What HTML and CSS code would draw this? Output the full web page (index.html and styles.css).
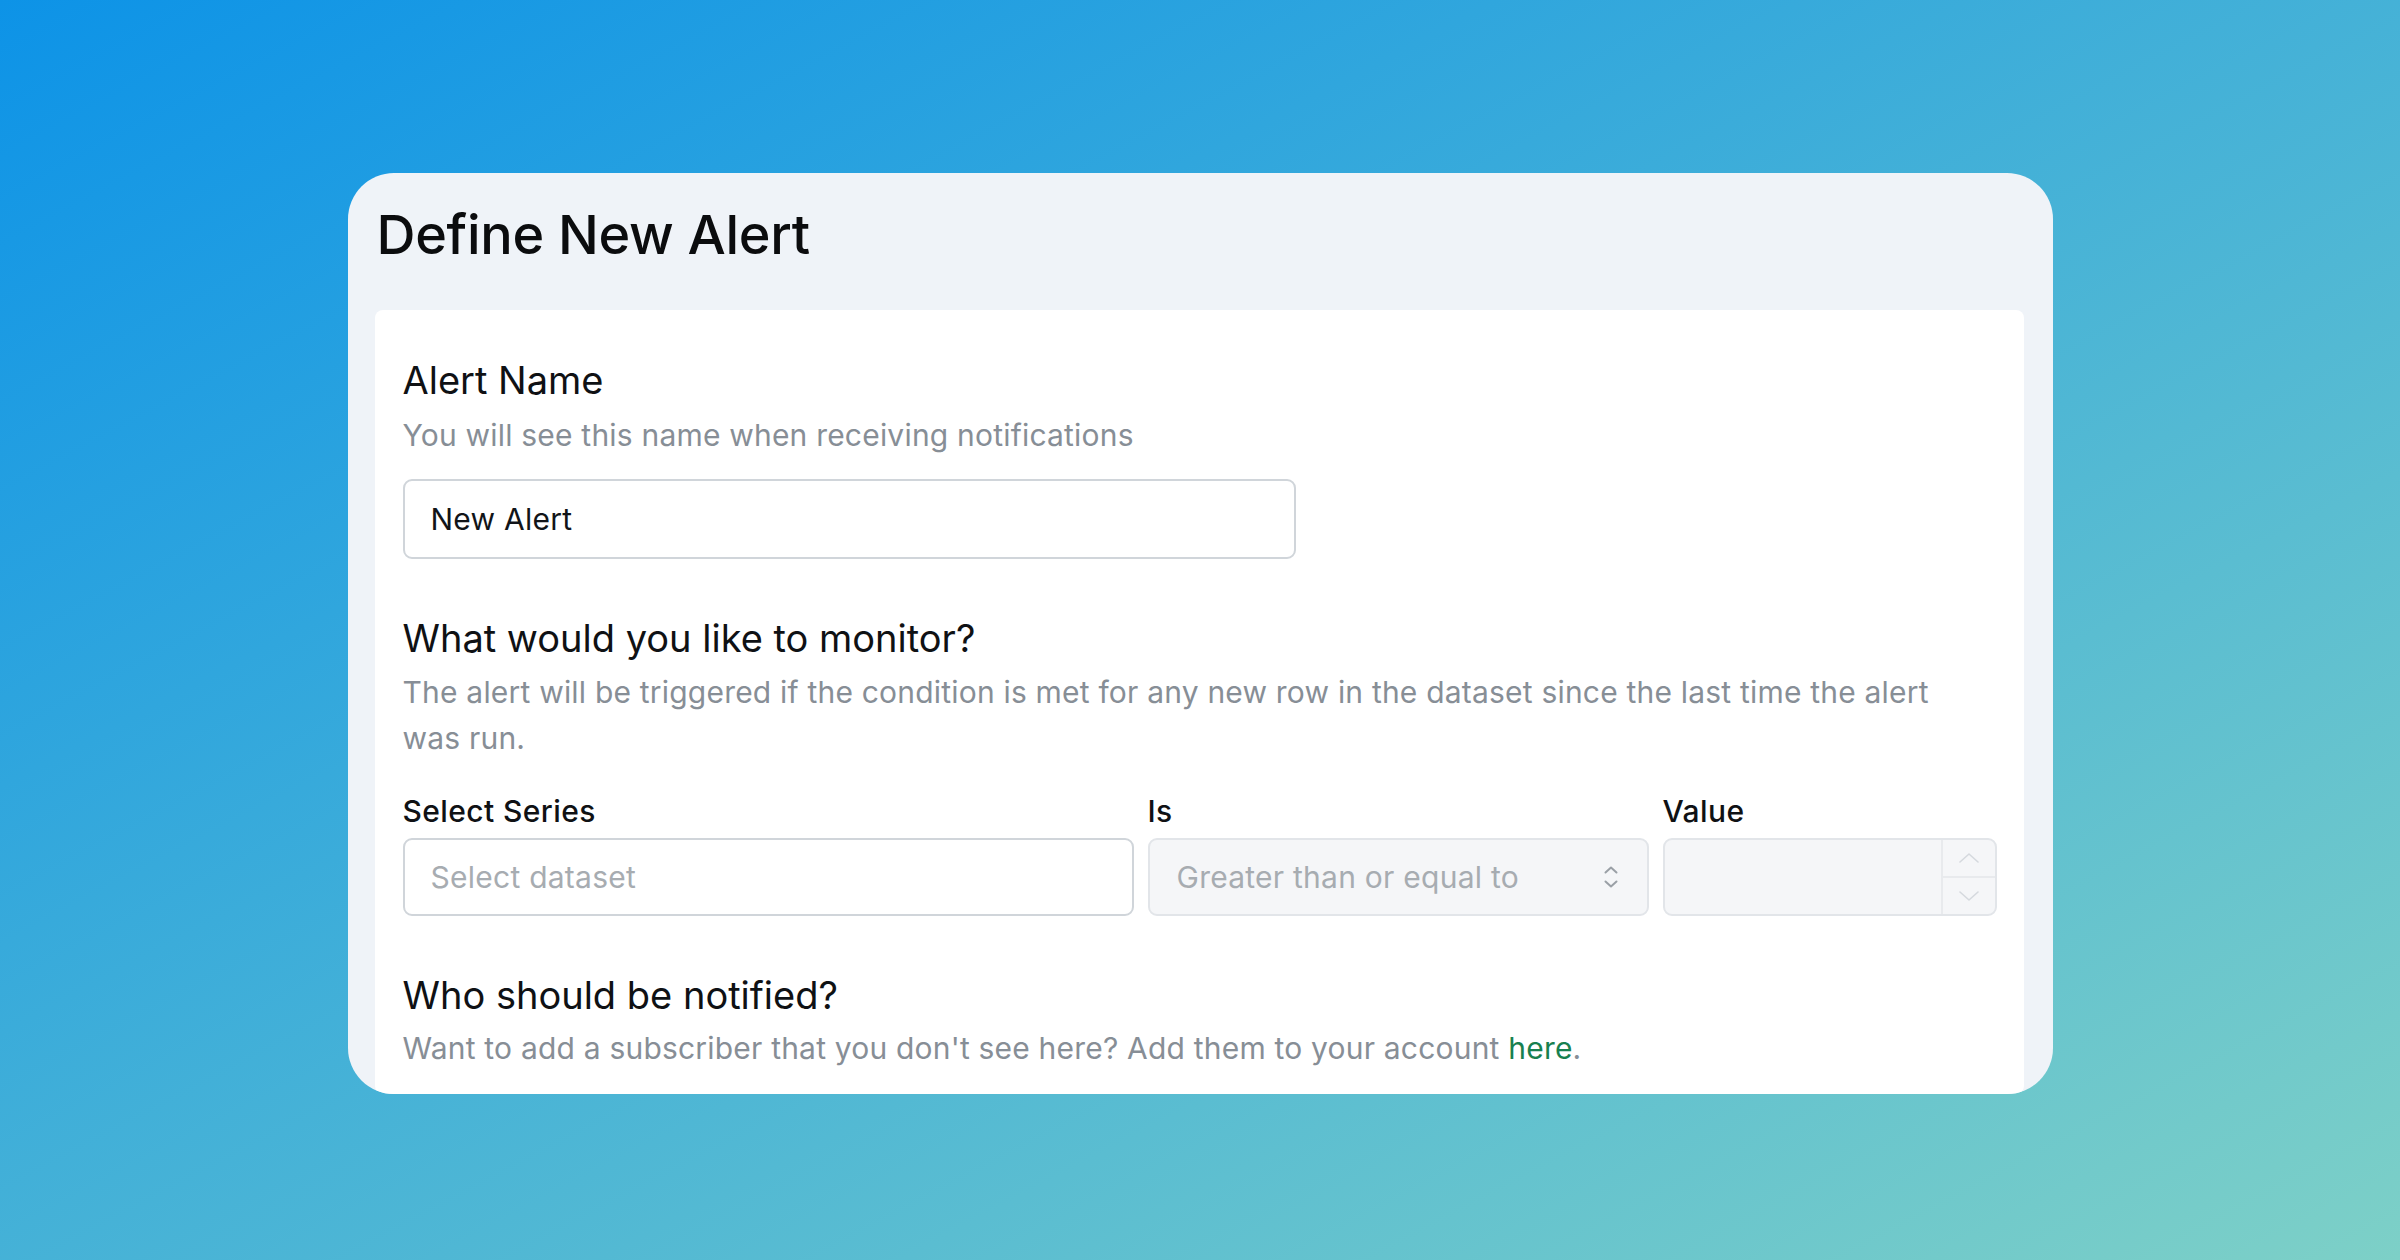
FILE: index.html
```html
<!DOCTYPE html>
<html lang="en">
<head>
<meta charset="utf-8">
<title>Define New Alert</title>
<link rel="stylesheet" href="styles.css">
</head>
<body>
<main class="card">
  <h1 class="title">Define New Alert</h1>
  <section class="panel">
    <h2 class="heading">Alert Name</h2>
    <p class="muted">You will see this name when receiving notifications</p>
    <input class="field name-field" type="text" value="New Alert">

    <h2 class="heading monitor">What would you like to monitor?</h2>
    <p class="muted monitor-text">The alert will be triggered if the condition is met for any new row in the dataset since the last time the alert was run.</p>

    <div class="condition">
      <div class="col">
        <label class="label">Select Series</label>
        <input class="field" type="text" placeholder="Select dataset">
      </div>
      <div class="col">
        <label class="label">Is</label>
        <div class="field select disabled">
          <span class="select-text">Greater than or equal to</span>
          <svg class="chev" width="14" height="24" viewBox="0 0 14 24" fill="none" stroke="#9aa0a6" stroke-width="2" stroke-linecap="round" stroke-linejoin="round">
            <path d="M1.5 7.5 L7 2.5 L12.5 7.5"/>
            <path d="M1.5 16.5 L7 21.5 L12.5 16.5"/>
          </svg>
        </div>
      </div>
      <div class="col">
        <label class="label">Value</label>
        <div class="field number disabled">
          <span class="num-body"></span>
          <span class="spin">
            <span class="spin-btn">
              <svg width="20" height="10" viewBox="0 0 20 10" fill="none" stroke="#d5d9de" stroke-width="1.6" stroke-linecap="round" stroke-linejoin="round"><path d="M1 9 L10 1 L19 9"/></svg>
            </span>
            <span class="spin-btn">
              <svg width="20" height="10" viewBox="0 0 20 10" fill="none" stroke="#d5d9de" stroke-width="1.6" stroke-linecap="round" stroke-linejoin="round"><path d="M1 1 L10 9 L19 1"/></svg>
            </span>
          </span>
        </div>
      </div>
    </div>

    <h2 class="heading notify">Who should be notified?</h2>
    <p class="muted">Want to add a subscriber that you don't see here? Add them to your account <a class="link" href="#">here</a>.</p>
  </section>
</main>
</body>
</html>
```
FILE: styles.css
```css
* { box-sizing: border-box; }

html, body {
  margin: 0;
  padding: 0;
}

body {
  width: 2400px;
  height: 1260px;
  display: flex;
  align-items: center;
  justify-content: center;
  background: linear-gradient(to bottom right, #0d93e7, #7dd0c7);
  font-family: Inter, "Noto Sans", "Liberation Sans", sans-serif;
  color: #111418;
}

.card {
  width: 1705px;
  height: 921px;
  margin-top: 7px;
  background: #eff3f8;
  border-radius: 46px;
  padding: 30px 29px 0 27px;
  display: flex;
  flex-direction: column;
  overflow: hidden;
}

.title {
  margin: 0 0 42px 2px;
  font-size: 54px;
  line-height: 1.2;
  font-weight: 500;
  letter-spacing: -0.3px;
  color: #0b0c0e;
}

.panel {
  flex: 1;
  background: #ffffff;
  border-radius: 8px;
  padding: 48px 27px 0 28px;
}

.heading {
  margin: 0;
  font-size: 38px;
  line-height: 44px;
  font-weight: 400;
  color: #0f1114;
}

.muted {
  margin: 10px 0 0;
  font-size: 30px;
  line-height: 46px;
  letter-spacing: 0.2px;
  color: #878e96;
}

.monitor { margin-top: 57px; }
.monitor + .muted { margin-top: 9px; }
.monitor-text { max-width: 1560px; }

.notify { margin-top: 57px; }
.notify + .muted { margin-top: 8px; }

.field {
  display: block;
  width: 100%;
  height: 78px;
  border: 2px solid #d0d5da;
  border-radius: 9px;
  background: #fff;
  padding: 0 26px;
  font-family: inherit;
  font-size: 30px;
  letter-spacing: 0.25px;
  color: #111418;
  outline: none;
}

.field::placeholder { color: #a7acb1; }

.name-field {
  width: 893px;
  height: 80px;
  margin-top: 21px;
}

.condition {
  display: grid;
  grid-template-columns: 731fr 501fr 334fr;
  column-gap: 14px;
  margin-top: 33px;
}

.col {
  display: flex;
  flex-direction: column;
  gap: 10px;
}

.label {
  font-size: 30px;
  line-height: 34px;
  font-weight: 500;
  letter-spacing: 0.4px;
  color: #0f1114;
}

.disabled {
  background: #f5f6f8;
  border-color: #e2e5e9;
}

.select {
  display: flex;
  align-items: center;
  justify-content: space-between;
  padding: 0 29px 0 27px;
}

.select-text {
  color: #a7acb1;
  font-size: 30px;
}

.chev { display: block; }

.number {
  display: flex;
  padding: 0;
}

.num-body { flex: 1; }

.spin {
  width: 54px;
  display: flex;
  flex-direction: column;
  border-left: 2px solid #e8eaed;
}

.spin-btn {
  flex: 1;
  display: flex;
  align-items: center;
  justify-content: center;
}

.spin-btn + .spin-btn { border-top: 2px solid #e8eaed; }

.link {
  color: #18804f;
  text-decoration: none;
}
```
